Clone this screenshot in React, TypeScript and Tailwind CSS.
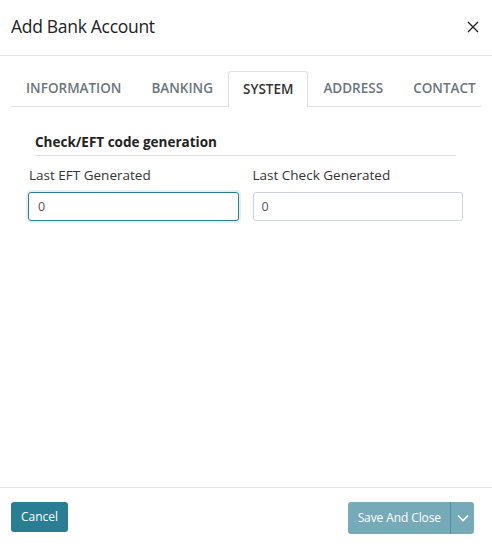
import React from "react";

export default function App() {
  const font = { fontFamily: '"Open Sans", "Noto Sans", sans-serif' };
  const tabs = ["INFORMATION", "BANKING", "SYSTEM", "ADDRESS", "CONTACT"];
  return (
    <div className="w-[492px] h-[547px] bg-white flex flex-col text-[#333]" style={font}>
      <div className="h-[56px] flex items-center justify-between pl-[11px] pr-[13px] border-b border-[#e5e5e5] shrink-0">
        <h1 className="text-[17.5px] text-[#222] tracking-[-0.3px] mt-[-2px]">Add Bank Account</h1>
        <svg width="12" height="12" viewBox="0 0 12 12" className="mt-[-2px]">
          <path d="M1 1 L11 11 M11 1 L1 11" stroke="#222" strokeWidth="1.4" />
        </svg>
      </div>
      <div className="flex-1 flex flex-col overflow-hidden">
        <div className="mt-[15px] ml-[11px] w-[470px] flex border-b border-[#dee2e6] h-[36px] items-stretch">
          {tabs.map((t) => {
            const active = t === "SYSTEM";
            return (
              <div
                key={t}
                className={
                  active
                    ? "px-[14px] flex items-center border border-b-0 border-[#dee2e6] rounded-t-[4px] bg-white mb-[-1px] text-[#333] text-[13.5px] font-semibold whitespace-nowrap"
                    : "px-[15px] flex items-center text-[#6c757d] text-[13.5px] font-semibold whitespace-nowrap"
                }
              >
                {t}
              </div>
            );
          })}
        </div>
        <div className="ml-[35px] w-[421px] mt-[26px] border-b border-[#dee2e6] pb-[4px]">
          <div className="text-[13.5px] font-bold text-[#222] leading-[18px]">Check/EFT code generation</div>
        </div>
        <div className="ml-[28px] w-[435px] grid grid-cols-2 gap-x-[14px] mt-[10px]">
          <div className="flex flex-col">
            <label className="text-[13.5px] text-[#333] ml-[1px] leading-[18px]">Last EFT Generated</label>
            <input
              readOnly
              value="0"
              className="mt-[8px] h-[29px] w-[211px] border border-[#2a7d93] rounded-[3px] px-[9px] text-[12.5px] text-[#555] outline-none shadow-[0_0_0_2px_rgba(42,125,147,0.12)]"
              style={font}
            />
          </div>
          <div className="flex flex-col">
            <label className="text-[13.5px] text-[#333] leading-[18px]">Last Check Generated</label>
            <input
              readOnly
              value="0"
              className="mt-[8px] h-[29px] w-[210px] border border-[#ced4da] rounded-[3px] px-[8px] text-[12.5px] text-[#555] outline-none"
              style={font}
            />
          </div>
        </div>
      </div>
      <div className="h-[60px] border-t border-[#e5e5e5] flex items-start justify-between pl-[11px] pr-[18px] pt-[14px] shrink-0">
        <button className="h-[30px] px-[10px] rounded-[3px] bg-[#2a7e94] text-white text-[12px]" style={font}>
          Cancel
        </button>
        <div className="flex h-[32px] rounded-[3px] bg-[#76aab9] text-white text-[12px] overflow-hidden" style={font}>
          <div className="pl-[10px] pr-[9px] flex items-center tracking-[-0.1px]">Save And Close</div>
          <div className="w-[1px] bg-[#4f8ea0]" />
          <div className="w-[23px] flex items-center justify-center">
            <svg width="12" height="8" viewBox="0 0 12 8">
              <path d="M1 1.5 L6 6.5 L11 1.5" stroke="white" strokeWidth="1.6" fill="none" />
            </svg>
          </div>
        </div>
      </div>
    </div>
  );
}
